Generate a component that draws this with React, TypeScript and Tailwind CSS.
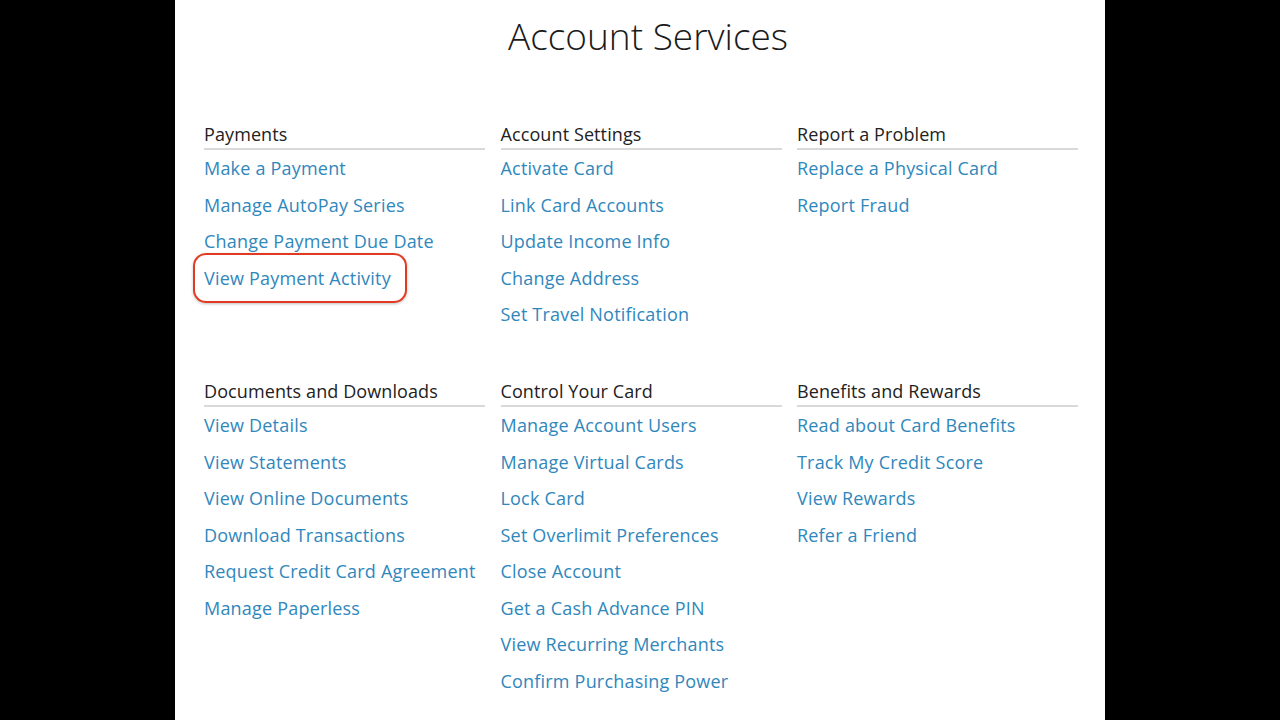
import React from "react";

type Section = {
  title: string;
  links: string[];
};

const sections: Section[] = [
  {
    title: "Payments",
    links: ["Make a Payment", "Manage AutoPay Series", "Change Payment Due Date", "View Payment Activity"],
  },
  {
    title: "Account Settings",
    links: ["Activate Card", "Link Card Accounts", "Update Income Info", "Change Address", "Set Travel Notification"],
  },
  {
    title: "Report a Problem",
    links: ["Replace a Physical Card", "Report Fraud"],
  },
  {
    title: "Documents and Downloads",
    links: [
      "View Details",
      "View Statements",
      "View Online Documents",
      "Download Transactions",
      "Request Credit Card Agreement",
      "Manage Paperless",
    ],
  },
  {
    title: "Control Your Card",
    links: [
      "Manage Account Users",
      "Manage Virtual Cards",
      "Lock Card",
      "Set Overlimit Preferences",
      "Close Account",
      "Get a Cash Advance PIN",
      "View Recurring Merchants",
      "Confirm Purchasing Power",
    ],
  },
  {
    title: "Benefits and Rewards",
    links: ["Read about Card Benefits", "Track My Credit Score", "View Rewards", "Refer a Friend"],
  },
];

// the link that gets the red outline
const highlighted = "View Payment Activity";

function ServiceGroup({ section }: { section: Section }) {
  return (
    <div>
      <h2 className="text-[18px] leading-[24px] text-[#222] pb-[2px] border-b-2 border-[#d9d9d9] tracking-[0.1px]">
        {section.title}
      </h2>
      <ul>
        {section.links.map((link) => (
          <li key={link} className="text-[18px] leading-[36.5px] tracking-[0.2px]">
            {link === highlighted ? (
              <span className="relative inline-block">
                <a href="#" className="text-[#3087bc]">
                  {link}
                </a>
                <span className="absolute -left-[11px] -right-[16px] top-[-7px] bottom-[-7px] border-[2.5px] border-[#e23a22] rounded-[13px] shadow-[0_1px_3px_rgba(0,0,0,0.25)]"></span>
              </span>
            ) : (
              <a href="#" className="text-[#3087bc]">
                {link}
              </a>
            )}
          </li>
        ))}
      </ul>
    </div>
  );
}

export default function App() {
  return (
    <div className="min-h-[720px] bg-black" style={{ fontFamily: '"Open Sans", "Noto Sans", sans-serif' }}>
      <div className="mx-auto w-[930px] min-h-[720px] bg-white pt-[12px]">
        <h1 className="pl-[16px] text-center text-[37px] leading-[48px] text-[#1a1a1a] font-light">Account Services</h1>
        <div className="mt-[62px] ml-[29px] grid grid-cols-[281px_281px_281px] gap-x-[15.5px] gap-y-[46.5px] items-start">
          {sections.map((section) => (
            <ServiceGroup key={section.title} section={section} />
          ))}
        </div>
      </div>
    </div>
  );
}
